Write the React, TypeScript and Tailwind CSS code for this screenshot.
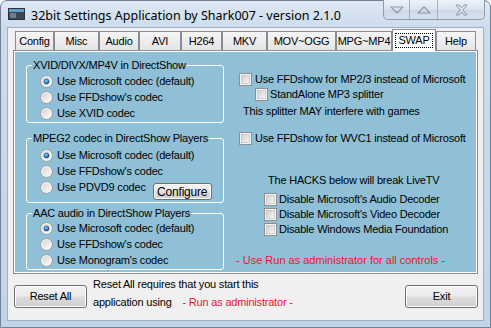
import React from "react";

const tabs = [
  { label: "Config", w: 39 },
  { label: "Misc", w: 45 },
  { label: "Audio", w: 40 },
  { label: "AVI", w: 42 },
  { label: "H264", w: 41 },
  { label: "MKV", w: 45 },
  { label: "MOV~OGG", w: 69 },
  { label: "MPG~MP4", w: 56 },
  { label: "SWAP", w: 44, active: true },
  { label: "Help", w: 40 },
];

function Radio({ checked }: { checked?: boolean }) {
  return (
    <svg width="13" height="13" viewBox="0 0 13 13" className="shrink-0">
      <defs>
        <linearGradient id="rdo-fill" x1="0" y1="0" x2="1" y2="1">
          <stop offset="0" stopColor="#d6d6d6" />
          <stop offset="1" stopColor="#fbfbfb" />
        </linearGradient>
        <radialGradient id="rdo-dot" cx="0.4" cy="0.35" r="0.7">
          <stop offset="0" stopColor="#8fd0ff" />
          <stop offset="0.6" stopColor="#2b7fcc" />
          <stop offset="1" stopColor="#17508c" />
        </radialGradient>
      </defs>
      <circle cx="6.5" cy="6.5" r="6" fill="#f4f4f4" stroke="#9a9a9a" />
      <circle cx="6.5" cy="6.5" r="4.5" fill="url(#rdo-fill)" />
      {checked && <circle cx="6.5" cy="6.5" r="2.6" fill="url(#rdo-dot)" stroke="#1d4f85" strokeWidth="0.6" />}
    </svg>
  );
}

function Check() {
  return (
    <svg width="13" height="13" viewBox="0 0 13 13" className="shrink-0">
      <defs>
        <linearGradient id="chk-fill" x1="0" y1="0" x2="1" y2="1">
          <stop offset="0" stopColor="#cfcfcf" />
          <stop offset="1" stopColor="#f6f6f6" />
        </linearGradient>
      </defs>
      <rect x="0.5" y="0.5" width="12" height="12" fill="#f4f4f4" stroke="#8e8f8f" />
      <rect x="2.5" y="2.5" width="8" height="8" fill="url(#chk-fill)" stroke="#b9b9b9" strokeWidth="0.6" />
    </svg>
  );
}

function RadioRow({ label, checked }: { label: string; checked?: boolean }) {
  return (
    <div className="flex h-[16px] items-center gap-[4px]">
      <Radio checked={checked} />
      <span>{label}</span>
    </div>
  );
}

function WinButton({ children, className }: { children: React.ReactNode; className?: string }) {
  return (
    <div
      className={
        "flex h-[23px] w-[73px] items-center justify-center rounded-[3px] border border-[#707070] bg-[linear-gradient(to_bottom,#f2f2f2_0%,#ebebeb_48%,#dddddd_52%,#cfcfcf_100%)] shadow-[inset_0_0_0_1px_#fcfcfc] " +
        (className ?? "")
      }
    >
      {children}
    </div>
  );
}

export default function App() {
  return (
    <div className="h-[328px] w-[491px] overflow-hidden bg-white">
      <div className="flex h-[328px] w-[491px] flex-col rounded-t-[7px] border border-[#6f8298] bg-[linear-gradient(to_bottom,#dde8f4_0px,#cddcec_26px,#c2d4e7_100%)] px-[6px] pb-[6px] font-['Liberation_Sans',Arial,sans-serif] text-[11px] tracking-[-0.2px] text-black">
        {/* title bar */}
        <div className="flex h-[26px] shrink-0 items-start">
          <svg width="17" height="12" viewBox="0 0 17 12" className="ml-[1px] mt-[7px] shrink-0">
            <rect x="0.5" y="0.5" width="16" height="11" fill="#3b4756" stroke="#2a323c" />
            <rect x="1" y="1" width="15" height="3" fill="#5fa0c8" />
            <rect x="2" y="5" width="6" height="5" fill="#6e7c8c" />
          </svg>
          <span className="ml-[6px] mt-[7px] font-['Noto_Sans',sans-serif] text-[12.5px] leading-[16px] tracking-normal text-black">
            32bit Settings Application by Shark007 - version 2.1.0
          </span>
          <div className="ml-auto mr-[-1px] mt-[-1px] flex h-[20px] overflow-hidden rounded-b-[5px] border border-t-0 border-[#8a9bb0] bg-[linear-gradient(to_bottom,#eef3f9,#d9e3ee_50%,#cbd8e6_51%,#d6e1ec)]">
            <div className="flex w-[26px] items-center justify-center border-r border-[#9fb0c3]">
              <svg width="14" height="8" viewBox="0 0 14 8">
                <path d="M1 1 H13 L7 7 Z" fill="none" stroke="#8d9aab" strokeWidth="1.2" strokeLinejoin="round" />
              </svg>
            </div>
            <div className="flex w-[28px] items-center justify-center border-r border-[#9fb0c3]">
              <svg width="14" height="8" viewBox="0 0 14 8">
                <path d="M1 7 H13 L7 1 Z" fill="none" stroke="#8d9aab" strokeWidth="1.2" strokeLinejoin="round" />
              </svg>
            </div>
            <div className="flex w-[46px] items-center justify-center">
              <svg width="13" height="12" viewBox="0 0 13 12">
                <path
                  d="M1 1 H4 L6.5 3.8 L9 1 H12 L8 6 L12 11 H9 L6.5 8.2 L4 11 H1 L5 6 Z"
                  fill="none"
                  stroke="#8d9aab"
                  strokeWidth="1"
                  strokeLinejoin="round"
                />
              </svg>
            </div>
          </div>
        </div>

        {/* client area */}
        <div className="flex flex-1 flex-col border border-[#9fb1c6] bg-[#f0f0f0]">
          {/* tab strip */}
          <div className="ml-[5px] mt-[1px] flex h-[21px] items-end pl-[2px]">
            {tabs.map((t) =>
              t.active ? (
                <div
                  key={t.label}
                  style={{ width: t.w }}
                  className="relative z-10 -mb-px flex h-[22px] items-center justify-center border border-b-0 border-[#898c95] bg-white"
                >
                  <span className="border border-dotted border-black px-[2px] leading-[13px]">{t.label}</span>
                </div>
              ) : (
                <div
                  key={t.label}
                  style={{ width: t.w }}
                  className="flex h-[19px] items-center justify-center border border-b-0 border-[#898c95] bg-[linear-gradient(to_bottom,#f6f6f6,#e4e4e4)] pt-px"
                >
                  {t.label}
                </div>
              )
            )}
          </div>

          {/* tab panel */}
          <div className="ml-[5px] flex h-[224px] w-[465px] border border-[#898c95] bg-white p-px">
            <div className="flex flex-1 bg-[#8fc0d7]">
              {/* left column */}
              <div className="ml-[11px] flex w-[198px] flex-col">
                <fieldset className="mt-[6px] rounded-[3px] border border-white pb-[1px] pl-[13px] pt-[1px]">
                  <legend className="ml-[-8px] px-[1px] leading-[14px]">XVID/DIVX/MP4V in DirectShow</legend>
                  <RadioRow label="Use Microsoft codec (default)" checked />
                  <RadioRow label="Use FFDshow's codec" />
                  <RadioRow label="Use XVID codec" />
                </fieldset>
                <fieldset className="mt-[8px] rounded-[3px] border border-white pb-[2px] pl-[13px] pt-[2px]">
                  <legend className="ml-[-8px] px-[1px] leading-[14px]">MPEG2 codec in DirectShow Players</legend>
                  <RadioRow label="Use Microsoft codec (default)" checked />
                  <RadioRow label="Use FFDshow's codec" />
                  <div className="flex items-start">
                    <RadioRow label="Use PDVD9 codec" />
                    <div className="ml-[7px] mt-[4px] flex h-[17px] w-[59px] items-center justify-center rounded-[3px] border border-[#707070] bg-[linear-gradient(to_bottom,#f2f2f2_0%,#ebebeb_48%,#dddddd_52%,#cfcfcf_100%)] text-[12px] shadow-[inset_0_0_0_1px_#fcfcfc]">
                      Configure
                    </div>
                  </div>
                </fieldset>
                <fieldset className="mt-[3px] rounded-[3px] border border-white pb-[1px] pl-[13px]">
                  <legend className="ml-[-8px] px-[1px] leading-[14px]">AAC audio in DirectShow Players</legend>
                  <RadioRow label="Use Microsoft codec (default)" checked />
                  <RadioRow label="Use FFDshow's codec" />
                  <RadioRow label="Use Monogram's codec" />
                </fieldset>
              </div>

              {/* right column */}
              <div className="ml-[12px] flex flex-1 flex-col">
                <div className="ml-[3px] mt-[20px] flex h-[15px] items-center gap-[3px]">
                  <Check />
                  <span>Use FFDshow for MP2/3 instead of Microsoft</span>
                </div>
                <div className="ml-[19px] flex h-[15px] items-center gap-[2px]">
                  <Check />
                  <span>StandAlone MP3 splitter</span>
                </div>
                <div className="ml-[7px] mt-[2px] flex h-[15px] items-center">This splitter MAY interfere with games</div>
                <div className="ml-[3px] mt-[12px] flex h-[15px] items-center gap-[3px]">
                  <Check />
                  <span>Use FFDshow for WVC1 instead of Microsoft</span>
                </div>
                <div className="ml-[32px] mt-[27px] flex h-[15px] items-center">The HACKS below will break LiveTV</div>
                <div className="ml-[28px] mt-[4px] flex flex-col">
                  <div className="flex h-[15px] items-center gap-[2px]">
                    <Check />
                    <span>Disable Microsoft's Audio Decoder</span>
                  </div>
                  <div className="flex h-[15px] items-center gap-[2px]">
                    <Check />
                    <span>Disable Microsoft's Video Decoder</span>
                  </div>
                  <div className="flex h-[15px] items-center gap-[2px]">
                    <Check />
                    <span>Disable Windows Media Foundation</span>
                  </div>
                </div>
                <div className="mt-[16px] flex h-[15px] items-center tracking-normal text-[#e8172c]">
                  - Use Run as administrator for all controls -
                </div>
              </div>
            </div>
          </div>

          {/* bottom row */}
          <div className="mt-[1px] flex items-start">
            <WinButton className="ml-[6px] mt-[10px]">Reset All</WinButton>
            <div className="ml-[6px] flex flex-col leading-[18px]">
              <span>Reset All requires that you start this</span>
              <span>
                application using<span className="ml-[11px] text-[#e8172c]">- Run as administrator -</span>
              </span>
            </div>
            <WinButton className="ml-auto mr-[5px] mt-[10px]">Exit</WinButton>
          </div>
        </div>
      </div>
    </div>
  );
}
